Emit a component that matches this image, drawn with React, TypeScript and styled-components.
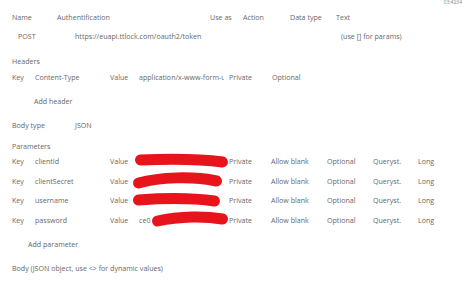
import React from "react";
import styled, { createGlobalStyle } from "styled-components";

const GlobalStyle = createGlobalStyle`
  body {
    margin: 0;
    background: #ffffff;
    font-family: "Open Sans", "Liberation Sans", sans-serif;
    font-size: 7.1px;
    color: #686868;
  }
`;

const params = [
  { name: "clientId", prefix: "", scribble: "M5.5 6 C30 5, 65 5, 87.5 8" },
  { name: "clientSecret", prefix: "", scribble: "M3.5 9 C25 3, 58 2, 81.5 7" },
  { name: "username", prefix: "", scribble: "M3.5 7 C30 5, 58 5, 79.5 8" },
  { name: "password", prefix: "ce0", scribble: "M22.5 8 C45 3, 70 3, 87.5 6" },
];

export default function App() {
  return (
    <Page>
      <GlobalStyle />
      <Stamp>03:4234</Stamp>

      <Row mt={10}>
        <Cell w={45}>Name</Cell>
        <Cell w={153}>Authentification</Cell>
        <Cell w={33}>Use as</Cell>
        <Cell w={47}>Action</Cell>
        <Cell w={46}>Data type</Cell>
        <Cell>Text</Cell>
      </Row>

      <Row mt={5}>
        <Cell w={63} indent={6}>POST</Cell>
        <Cell w={266}>https://euapi.ttlock.com/oauth2/token</Cell>
        <Cell>(use [] for params)</Cell>
      </Row>

      <Row mt={11}>Headers</Row>

      <Row mt={2}>
        <Cell w={23}>Key</Cell>
        <Cell w={75}>Content-Type</Cell>
        <Cell w={29}>Value</Cell>
        <ClipCell>application/x-www-form-urlencoded</ClipCell>
        <Cell w={43}>Private</Cell>
        <Cell>Optional</Cell>
      </Row>

      <Row mt={10} indent={22}>Add header</Row>

      <Row mt={10}>
        <Cell w={63}>Body type</Cell>
        <Cell>JSON</Cell>
      </Row>

      <Row mt={7}>Parameters</Row>

      <ParamList>
        {params.map((p) => (
          <Row key={p.name}>
            <Cell w={23}>Key</Cell>
            <Cell w={75}>{p.name}</Cell>
            <Cell w={25}>Value</Cell>
            <ValueCell>
              {p.prefix}
              <Scribble viewBox="0 0 94 14" preserveAspectRatio="none">
                <path d={p.scribble} />
              </Scribble>
            </ValueCell>
            <Cell w={42}>Private</Cell>
            <Cell w={56}>Allow blank</Cell>
            <Cell w={46}>Optional</Cell>
            <Cell w={45}>Queryst.</Cell>
            <Cell>Long</Cell>
          </Row>
        ))}
      </ParamList>

      <Row mt={10} indent={16}>Add parameter</Row>

      <Row mt={10}>Body (JSON object, use &lt;&gt; for dynamic values)</Row>
    </Page>
  );
}

const Page = styled.div`
  position: relative;
  width: 474px;
  height: 304px;
  padding-left: 12px;
  box-sizing: border-box;
  overflow: hidden;
`;

const Stamp = styled.div`
  position: absolute;
  top: -1px;
  right: 12px;
  font-size: 5px;
  color: #8a8a8a;
`;

const Row = styled.div<{ mt?: number; indent?: number }>`
  display: flex;
  align-items: center;
  height: 14px;
  margin-top: ${(p) => p.mt ?? 0}px;
  padding-left: ${(p) => p.indent ?? 0}px;
  white-space: nowrap;
`;

const Cell = styled.span<{ w?: number; indent?: number }>`
  flex: none;
  width: ${(p) => (p.w ? `${p.w}px` : "auto")};
  padding-left: ${(p) => p.indent ?? 0}px;
  box-sizing: border-box;
`;

const ClipCell = styled.span`
  flex: none;
  width: 85px;
  margin-right: 5px;
  overflow: hidden;
`;

const ParamList = styled.div`
  display: flex;
  flex-direction: column;
  gap: 5.7px;
  margin-top: 1px;
`;

const ValueCell = styled.span`
  position: relative;
  flex: none;
  width: 94px;
  height: 14px;
  line-height: 14px;
  padding-left: 4px;
  box-sizing: border-box;
`;

const Scribble = styled.svg`
  position: absolute;
  left: 0;
  top: 0;
  width: 94px;
  height: 14px;
  overflow: visible;

  path {
    fill: none;
    stroke: #e8141c;
    stroke-width: 11;
    stroke-linecap: round;
  }
`;
